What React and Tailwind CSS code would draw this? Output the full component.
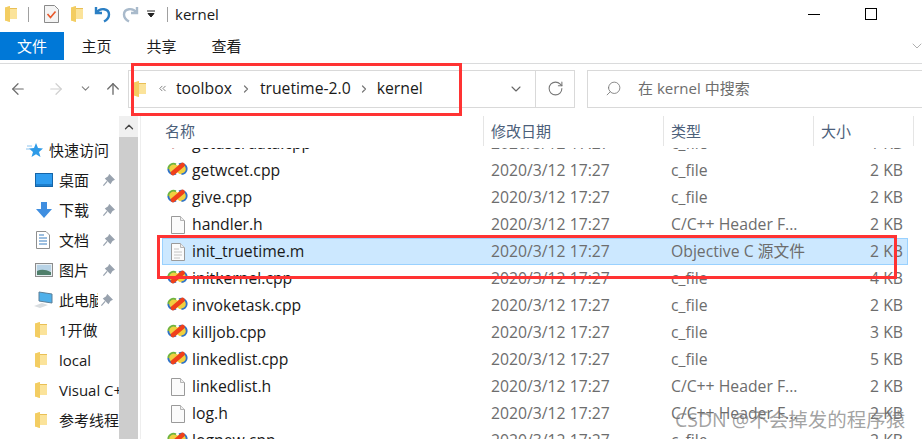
import React from 'react';
import { ArrowLeft, ArrowRight, ArrowUp, ChevronDown, ChevronRight, ChevronUp, ChevronsLeft, RotateCw, Search } from 'lucide-react';

const FolderIcon = ({ className = '' }) => (
  <svg viewBox="0 0 12 16" className={className}>
    <path d="M0 1.5 L5 0 V2 H12 V13 H5 V16 L0 14.5 Z" fill="#fbe39a" />
    <path d="M0 1.5 L5 0 V16 L0 14.5 Z" fill="#f3cd62" />
    <path d="M5 2 H12 V3 H5 Z" fill="#e9bf55" />
  </svg>
);

const BlankFile = ({ lines }) => (
  <svg viewBox="0 0 16 18" className="w-4 h-[18px]">
    <path d="M1.5 .5 H10.5 L14.5 4.5 V17.5 H1.5 Z" fill="#fbfbfb" stroke="#9a9a9a" />
    <path d="M10.5 .5 V4.5 H14.5" fill="#eee" stroke="#b5b5b5" />
    {lines && <path d="M4 6 H9 M4 9 H12 M4 12 H12 M4 15 H10" stroke="#c4c4c4" />}
  </svg>
);

const CppIcon = () => (
  <svg viewBox="0 0 21 14" className="w-[21px] h-[14px] -mt-[4px]">
    <circle cx="6.5" cy="7" r="5.2" fill="#f0d040" />
    <circle cx="14.5" cy="7" r="5.2" fill="#f0d040" />
    <path d="M1.3 7 A5.2 5.2 0 0 1 9 2.4" fill="none" stroke="#6fb43f" strokeWidth="1.8" />
    <path d="M1.3 7 A5.2 5.2 0 0 0 9 11.6" fill="none" stroke="#2f73c9" strokeWidth="1.8" />
    <path d="M12 2.4 A5.2 5.2 0 0 1 19.7 7 A5.2 5.2 0 0 1 14.5 12.2" fill="none" stroke="#2f73c9" strokeWidth="1.8" />
    <path d="M6 11 L15.5 3" stroke="#f0401a" strokeWidth="4.6" strokeLinecap="round" />
  </svg>
);

const Pin = () => (
  <svg viewBox="0 0 14 14" className="w-[13px] h-[13px]">
    <path d="M8 1 L13 6 L11 7 L9 10 L4 5 L7 3 Z M5.5 8 L1.5 12.5" fill="#98a2ae" stroke="#98a2ae" strokeWidth="1.3" />
  </svg>
);

const DesktopIcon = () => (
  <svg viewBox="0 0 18 14" className="w-[18px] h-[14px]">
    <rect x=".5" y=".5" width="17" height="13" fill="#2f9df0" stroke="#1565a8" />
    <path d="M1 12 L17 12" stroke="#0c5ea6" />
  </svg>
);

const DownloadIcon = () => (
  <svg viewBox="0 0 18 18" className="w-[18px] h-[18px]">
    <path d="M6 1 H12 V8 H17 L9 17 L1 8 H6 Z" fill="#3f8ee0" />
  </svg>
);

const DocsIcon = () => (
  <svg viewBox="0 0 16 18" className="w-4 h-[18px]">
    <path d="M1.5 .5 H11 L14.5 4 V17.5 H1.5 Z" fill="#fff" stroke="#8f8f8f" />
    <path d="M4 4 H9 M4 7 H12 M4 10 H12 M4 13 H12" stroke="#3a7fc0" />
  </svg>
);

const PicturesIcon = () => (
  <svg viewBox="0 0 18 14" className="w-[18px] h-[14px]">
    <rect x=".5" y=".5" width="17" height="13" fill="#e7eef2" stroke="#8c8c8c" />
    <rect x="2" y="2" width="14" height="6" fill="#b8d3e6" />
    <path d="M2 8 Q8 5 16 9 V12 H2 Z" fill="#4f7f6b" />
  </svg>
);

const PcIcon = () => (
  <svg viewBox="0 0 20 18" className="w-5 h-[18px] -ml-[2px]">
    <path d="M6 1 L19 3 V12 L6 10 Z" fill="#4fb0ea" stroke="#5c7f97" />
    <path d="M1 15 L9 12 L15 14 L7 17 Z" fill="#d9dde0" />
  </svg>
);

const navItems = [
  { icon: <DesktopIcon />, label: '桌面', pin: true },
  { icon: <DownloadIcon />, label: '下载', pin: true },
  { icon: <DocsIcon />, label: '文档', pin: true },
  { icon: <PicturesIcon />, label: '图片', pin: true },
  { icon: <PcIcon />, label: '此电脑', pin: true, clip: true },
  { icon: <FolderIcon className="w-3 h-4" />, label: '1开做' },
  { icon: <FolderIcon className="w-3 h-4" />, label: 'local' },
  { icon: <FolderIcon className="w-3 h-4" />, label: 'Visual C++' },
  { icon: <FolderIcon className="w-3 h-4" />, label: '参考线程' },
];

const files = [
  { name: 'getuserdata.cpp', icon: 'cpp', type: 'c_file', size: '1 KB' },
  { name: 'getwcet.cpp', icon: 'cpp', type: 'c_file', size: '2 KB' },
  { name: 'give.cpp', icon: 'cpp', type: 'c_file', size: '2 KB' },
  { name: 'handler.h', icon: 'h', type: 'C/C++ Header F...', size: '2 KB' },
  { name: 'init_truetime.m', icon: 'm', type: 'Objective C 源文件', size: '2 KB', selected: true },
  { name: 'initkernel.cpp', icon: 'cpp', type: 'c_file', size: '4 KB' },
  { name: 'invoketask.cpp', icon: 'cpp', type: 'c_file', size: '2 KB' },
  { name: 'killjob.cpp', icon: 'cpp', type: 'c_file', size: '3 KB' },
  { name: 'linkedlist.cpp', icon: 'cpp', type: 'c_file', size: '5 KB' },
  { name: 'linkedlist.h', icon: 'h', type: 'C/C++ Header F...', size: '2 KB' },
  { name: 'log.h', icon: 'h', type: 'C/C++ Header F...', size: '2 KB' },
  { name: 'lognew.cpp', icon: 'cpp', type: 'c_file', size: '2 KB' },
];

const App = () => (
  <div
    className="relative w-[922px] h-[439px] overflow-hidden bg-white text-[15.75px] text-[#1a1a1a]"
    style={{ fontFamily: '"Open Sans", "Noto Sans CJK SC", sans-serif' }}
  >
    {/* Title bar */}
    <div className="h-8 flex items-center pb-[4px]">
      <FolderIcon className="w-3 h-4 ml-[5px]" />
      <div className="w-px h-[15px] bg-[#a0a0a0] ml-[11px]" />
      <svg viewBox="0 0 15 18" className="w-[15px] h-[18px] ml-[15px]">
        <path d="M.5 .5 H10.5 L14.5 4.5 V17.5 H.5 Z" fill="#f4f4f4" stroke="#8a8a8a" />
        <path d="M3.5 9 L6.5 12.5 L11.5 6.5" fill="none" stroke="#e8582a" strokeWidth="1.6" />
      </svg>
      <FolderIcon className="w-3 h-4 ml-[12px]" />
      <svg viewBox="0 0 18 18" className="w-[18px] h-[18px] ml-[11px]">
        <path d="M2 2 V8 H8 M2.5 7.5 C6 2.5 15 3 15 9.5 C15 12.5 13 15 10 16.5" fill="none" stroke="#2b7fc4" strokeWidth="2.4" />
      </svg>
      <svg viewBox="0 0 18 18" className="w-[18px] h-[18px] ml-[9px]">
        <path d="M16 2 V8 H10 M15.5 7.5 C12 2.5 3 3 3 9.5 C3 12.5 5 15 8 16.5" fill="none" stroke="#a9bacb" strokeWidth="2.4" />
      </svg>
      <svg viewBox="0 0 8 8" className="w-2 h-2 ml-[8px]">
        <path d="M0 1 H8 M1 3.5 H7 L4 7 Z" stroke="#222" fill="#222" />
      </svg>
      <div className="w-px h-[15px] bg-[#a0a0a0] ml-[12px]" />
      <span className="ml-[7px] text-[15px]">kernel</span>
      <div className="ml-auto w-3 h-px bg-black" />
      <div className="ml-[45px] mr-[45px] w-3 h-3 border border-black" />
    </div>

    {/* Ribbon tabs */}
    <div className="h-[28px] flex items-center text-[15px]">
      <div className="w-16 h-full bg-[#0078d7] text-white flex items-center justify-center">文件</div>
      <div className="w-[65px] text-center">主页</div>
      <div className="w-[65px] text-center">共享</div>
      <div className="w-[65px] text-center">查看</div>
      <ChevronDown size={16} strokeWidth={1} className="ml-auto -mr-[3px] text-[#888]" />
    </div>
    <div className="h-[3px]" />
    <div className="h-px bg-[#dadbdc]" />

    {/* Address row */}
    <div className="h-[52px] flex items-center pb-[3px]">
      <ArrowLeft size={18} strokeWidth={1.6} className="ml-[9px] text-[#6d6d6d]" />
      <ArrowRight size={18} strokeWidth={1.6} className="ml-[20px] text-[#d0d0d0]" />
      <ChevronDown size={13} strokeWidth={2} className="ml-[14px] text-[#808080]" />
      <ArrowUp size={18} strokeWidth={1.8} className="ml-[12px] text-[#6d6d6d]" />
      <div className="ml-[6px] w-[447px] h-[38px] border border-[#d9d9d9] flex items-center">
        <div className="w-[407px] h-full flex items-center border-r border-[#d9d9d9]">
          <FolderIcon className="w-3 h-4 ml-[5px]" />
          <ChevronsLeft size={11} className="ml-[11px] text-[#777]" />
          <span className="ml-[8px]">toolbox</span>
          <ChevronRight size={12} strokeWidth={2.4} className="mx-[8px] text-[#777]" />
          <span>truetime-2.0</span>
          <ChevronRight size={12} strokeWidth={2.4} className="mx-[7px] text-[#777]" />
          <span>kernel</span>
          <ChevronDown size={16} strokeWidth={1.6} className="ml-auto mr-[11px] text-[#666]" />
        </div>
        <div className="flex-1 flex justify-center">
          <RotateCw size={17} strokeWidth={1.5} className="text-[#777]" />
        </div>
      </div>
      <div className="ml-[12px] flex-1 h-[38px] border border-[#d9d9d9] border-r-0 flex items-center text-[15px]">
        <Search size={17} strokeWidth={1.2} className="ml-[17px] -scale-x-100 text-[#777]" />
        <span className="ml-[16px] text-[#6d6d6d]">在 kernel 中搜索</span>
      </div>
    </div>

    {/* Body */}
    <div className="flex h-[324px]">
      <nav className="w-[119px] shrink-0 overflow-hidden pt-[19px] whitespace-nowrap text-[15px]">
        <div className="h-[30px] flex items-center pl-[26px]">
          <svg viewBox="0 0 18 16" className="w-[18px] h-4">
            <path d="M10 1 L12 6 L17 6.5 L13 10 L14.5 15 L10 12.3 L5.5 15 L7 10 L3 6.5 L8 6 Z" fill="#2e9be8" />
            <path d="M1 4 H6 M0 7 H4" stroke="#8cc4ef" />
          </svg>
          <span className="ml-[5px]">快速访问</span>
        </div>
        {navItems.map(item => (
          <div key={item.label} className="h-[30px] flex items-center">
            <div className="w-[59px] pl-[35px] shrink-0 flex items-center">{item.icon}</div>
            <span className={item.clip ? 'w-[39px] overflow-hidden shrink-0' : 'shrink-0'}>{item.label}</span>
            {item.pin && <span className={item.clip ? 'ml-[2px]' : 'ml-[13px]'}><Pin /></span>}
          </div>
        ))}
      </nav>

      {/* Sidebar scrollbar */}
      <div className="w-[19px] shrink-0 bg-[#f0f0f0] flex flex-col">
        <div className="h-[21px] flex items-center justify-center">
          <ChevronUp size={14} strokeWidth={2.2} className="text-[#444]" />
        </div>
        <div className="flex-1 bg-[#cdcdcd]" />
      </div>

      {/* File list */}
      <div className="flex-1 min-w-0 ml-[2px] border-l border-[#eeeeee] overflow-hidden">
        <div className="grid grid-cols-[321px_180px_150px_100px_1fr] relative z-10 bg-white h-[32px] ml-[21px] pb-[2px] text-[15px] text-[#4c607a]">
          <span className="pl-[3px] flex items-center">名称</span>
          <span className="pl-[7px] flex items-center border-l border-[#e5e5e5]">修改日期</span>
          <span className="pl-[7px] flex items-center border-l border-[#e5e5e5]">类型</span>
          <span className="pl-[7px] flex items-center border-l border-[#e5e5e5]">大小</span>
          <span className="border-l border-[#e5e5e5]" />
        </div>
        <div className="-mt-[18px] ml-[21px] mr-[14px]">
          {files.map(file => (
            <div
              key={file.name}
              className={`grid grid-cols-[328px_180px_150px_1fr] items-center h-[27px] border ${file.selected ? 'bg-[#cce8ff] border-[#99d1ff]' : 'border-transparent'}`}
            >
              <div className="flex items-center gap-[4px] pl-[4px] overflow-hidden whitespace-nowrap">
                <span className="w-[21px] shrink-0 flex justify-center">
                  {file.icon === 'cpp' ? <CppIcon /> : <BlankFile lines={file.icon === 'm'} />}
                </span>
                <span>{file.name}</span>
              </div>
              <span className="text-[#6d6d6d]">2020/3/12 17:27</span>
              <span className="text-[#6d6d6d]">{file.type}</span>
              <span className="pr-[4px] text-right text-[#6d6d6d]">{file.size}</span>
            </div>
          ))}
        </div>
      </div>
    </div>

    {/* Sort arrow over header */}
    <ChevronUp size={12} strokeWidth={1} className="absolute left-[315px] top-[111px] text-[#888]" />

    {/* Red annotation boxes */}
    <div className="absolute left-[131px] top-[63px] w-[331px] h-[53px] border-[3px] border-[#ff3333]" />
    <div className="absolute left-[157px] top-[235px] w-[740px] h-[44px] border-[3px] border-[#ff3333]" />

    {/* Watermark */}
    <span className="absolute left-[675px] top-[405px] text-[19.5px] text-[#7a7a7a]/70 whitespace-nowrap">CSDN @不会掉发的程序猿</span>
  </div>
);

export default App;
